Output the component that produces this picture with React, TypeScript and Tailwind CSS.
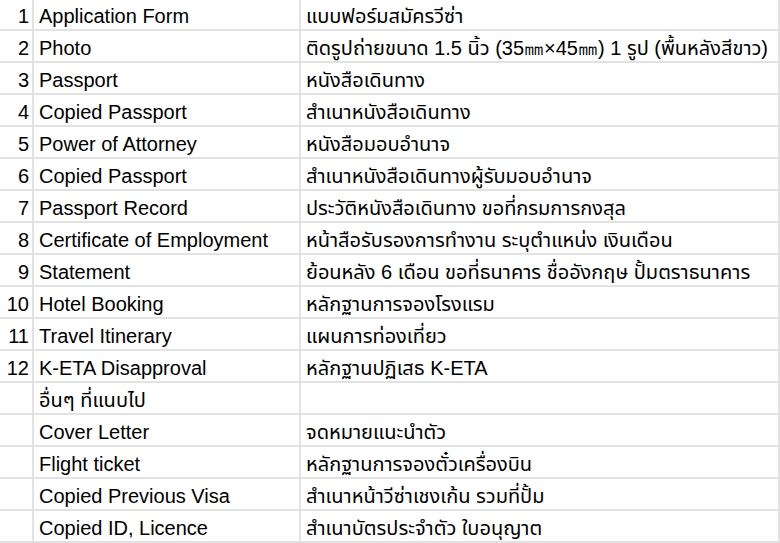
import React from 'react';

interface Row {
	no: string;
	name: string;
	detail: string;
}

const rows: Row[] = [
	{ no: '1', name: 'Application Form', detail: 'แบบฟอร์มสมัครวีซ่า' },
	{ no: '2', name: 'Photo', detail: 'ติดรูปถ่ายขนาด 1.5 นิ้ว (35㎜×45㎜) 1 รูป (พื้นหลังสีขาว)' },
	{ no: '3', name: 'Passport', detail: 'หนังสือเดินทาง' },
	{ no: '4', name: 'Copied Passport', detail: 'สำเนาหนังสือเดินทาง' },
	{ no: '5', name: 'Power of Attorney', detail: 'หนังสือมอบอำนาจ' },
	{ no: '6', name: 'Copied Passport', detail: 'สำเนาหนังสือเดินทางผู้รับมอบอำนาจ' },
	{ no: '7', name: 'Passport Record', detail: 'ประวัติหนังสือเดินทาง ขอที่กรมการกงสุล' },
	{ no: '8', name: 'Certificate of Employment', detail: 'หน้าสือรับรองการทำงาน ระบุตำแหน่ง เงินเดือน' },
	{ no: '9', name: 'Statement', detail: 'ย้อนหลัง 6 เดือน ขอที่ธนาคาร ชื่ออังกฤษ ปั้มตราธนาคาร' },
	{ no: '10', name: 'Hotel Booking', detail: 'หลักฐานการจองโรงแรม' },
	{ no: '11', name: 'Travel Itinerary', detail: 'แผนการท่องเที่ยว' },
	{ no: '12', name: 'K-ETA Disapproval', detail: 'หลักฐานปฏิเสธ K-ETA' },
	{ no: '', name: 'อื่นๆ ที่แนบไป', detail: '' },
	{ no: '', name: 'Cover Letter', detail: 'จดหมายแนะนำตัว' },
	{ no: '', name: 'Flight ticket', detail: 'หลักฐานการจองตั๋วเครื่องบิน' },
	{ no: '', name: 'Copied Previous Visa', detail: 'สำเนาหน้าวีซ่าเชงเก้น รวมที่ปั้ม' },
	{ no: '', name: 'Copied ID, Licence', detail: 'สำเนาบัตรประจำตัว ใบอนุญาต' },
];

export default function App() {
	return (
		<div
			className="w-[780px] h-[543px] overflow-hidden bg-white text-black text-[20px] leading-none"
			style={{ fontFamily: '"Liberation Sans", Arial, "Noto Sans Thai", "Noto Sans", sans-serif' }}
		>
			<div className="-mt-px">
				{rows.map((row, i) => (
					<div key={i} className="flex h-[32px] border-b-2 border-[#e2e2e2]">
						<div className="w-[34px] shrink-0 border-r-2 border-[#e2e2e2] flex items-center justify-end pr-[3px] pt-[3px]">
							{row.no}
						</div>
						<div className="w-[267px] shrink-0 border-r-2 border-[#e2e2e2] flex items-center pl-[5px] pt-[3px] whitespace-nowrap">
							{row.name}
						</div>
						<div className="w-[479px] shrink-0 border-r-2 border-[#e2e2e2] flex items-center pl-[5px] pt-[3px] whitespace-nowrap overflow-hidden">
							{row.detail}
						</div>
					</div>
				))}
			</div>
		</div>
	);
}
